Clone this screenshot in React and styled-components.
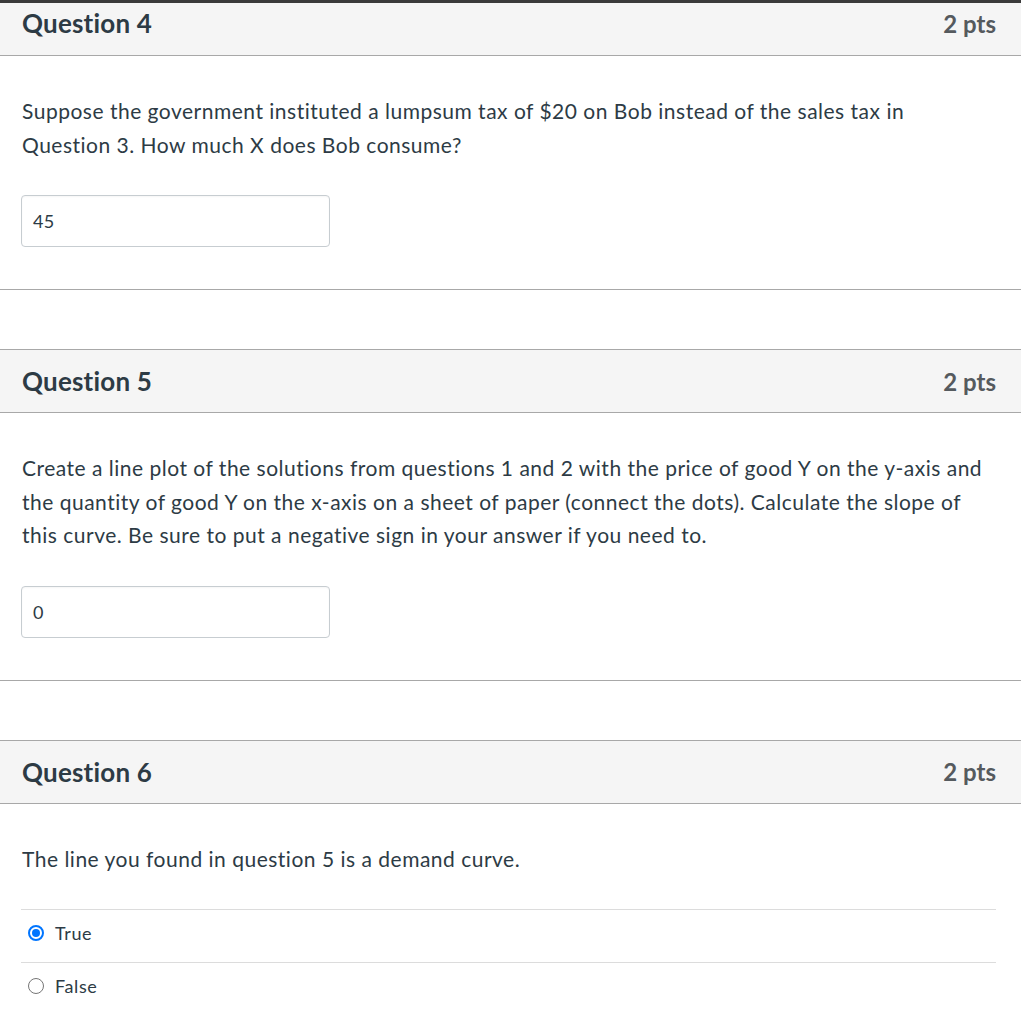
import React from "react";
import styled, { createGlobalStyle } from "styled-components";

const Global = createGlobalStyle`
  html, body { margin: 0; padding: 0; background: #fff; }
  body { font-family: Lato, "Open Sans", sans-serif; color: #2d3b45; }
`;

const Page = styled.div`
  width: 1021px;
  display: flex;
  flex-direction: column;
`;

const TopBar = styled.div`
  height: 3px;
  background: #3b3b3b;
`;

const Card = styled.section`
  display: flex;
  flex-direction: column;
  border-top: ${(p) => (p.$first ? "none" : "1px solid #a8a8a8")};
  border-bottom: ${(p) => (p.$last ? "none" : "1px solid #a8a8a8")};
  margin-top: ${(p) => (p.$first ? "0" : "59px")};
`;

const Header = styled.header`
  box-sizing: border-box;
  height: ${(p) => (p.$short ? "53px" : "63px")};
  padding: ${(p) => (p.$short ? "0 25px 12px 22px" : "0 25px 0 22px")};
  background: #f5f5f5;
  border-bottom: 1px solid #a8a8a8;
  display: flex;
  align-items: center;
  justify-content: space-between;
`;

const Title = styled.h2`
  margin: 0;
  font-size: 26px;
  letter-spacing: 0.2px;
  font-weight: 700;
  color: #2d3b45;
`;

const Points = styled.span`
  font-size: 24px;
  font-weight: 700;
  color: #555a5e;
`;

const Body = styled.div`
  padding: 38px 25px 42px 22px;
  display: flex;
  flex-direction: column;
`;

const Text = styled.p`
  margin: 0;
  font-size: 21px;
  letter-spacing: 0.5px;
  line-height: 33.5px;
  color: #2d3b45;
`;

const AnswerBox = styled.div`
  margin-top: 34px;
  box-sizing: border-box;
  width: 309px;
  height: 52px;
  margin-left: -1px;
  border: 1px solid #c7cdd1;
  border-radius: 4px;
  display: flex;
  align-items: center;
  padding-left: 11px;
  font-size: 18px;
  letter-spacing: 0.4px;
  color: #2d3b45;
  box-shadow: inset 0 1px 2px rgba(0, 0, 0, 0.04);
`;

const Choices = styled.div`
  margin-top: 34px;
  display: flex;
  flex-direction: column;
  margin-left: -1px;
`;

const Choice = styled.label`
  box-sizing: border-box;
  height: 53px;
  padding: 0 0 6px 7px;
  border-top: 1px solid #dcdcdc;
  display: flex;
  align-items: center;
  gap: 11px;
  font-size: 18px;
  letter-spacing: 0.6px;
  color: #2d3b45;
`;

const Radio = styled.span`
  width: 16px;
  height: 16px;
  border-radius: 50%;
  box-sizing: border-box;
  border: ${(p) => (p.$checked ? "2px solid #0075ff" : "1.5px solid #767676")};
  display: flex;
  align-items: center;
  justify-content: center;
  flex: none;
  &::after {
    content: "";
    width: 8px;
    height: 8px;
    border-radius: 50%;
    background: ${(p) => (p.$checked ? "#0075ff" : "transparent")};
  }
`;

export default function App() {
  return (
    <Page>
      <Global />
      <TopBar />
      <Card $first>
        <Header $short>
          <Title>Question 4</Title>
          <Points>2 pts</Points>
        </Header>
        <Body>
          <Text>
            Suppose the government instituted a lumpsum tax of $20 on Bob instead of the sales tax in
            Question 3. How much X does Bob consume?
          </Text>
          <AnswerBox>45</AnswerBox>
        </Body>
      </Card>
      <Card>
        <Header>
          <Title>Question 5</Title>
          <Points>2 pts</Points>
        </Header>
        <Body>
          <Text>
            Create a line plot of the solutions from questions 1 and 2 with the price of good Y on the y-axis and
            the quantity of good Y on the x-axis on a sheet of paper (connect the dots). Calculate the slope of
            this curve. Be sure to put a negative sign in your answer if you need to.
          </Text>
          <AnswerBox>0</AnswerBox>
        </Body>
      </Card>
      <Card $last>
        <Header>
          <Title>Question 6</Title>
          <Points>2 pts</Points>
        </Header>
        <Body>
          <Text>The line you found in question 5 is a demand curve.</Text>
          <Choices>
            <Choice>
              <Radio $checked />
              True
            </Choice>
            <Choice>
              <Radio />
              False
            </Choice>
          </Choices>
        </Body>
      </Card>
    </Page>
  );
}
